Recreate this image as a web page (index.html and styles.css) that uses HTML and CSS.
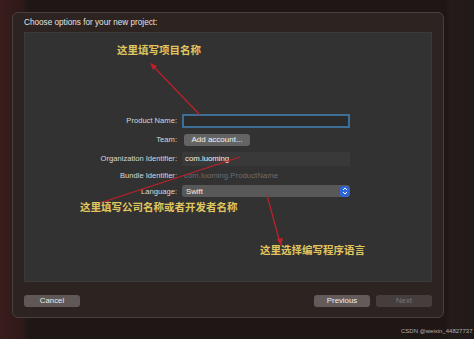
FILE: index.html
```html
<!DOCTYPE html>
<html>
<head>
<meta charset="utf-8">
<link rel="stylesheet" href="styles.css">
</head>
<body>
<div class="screen">
  <div class="dialog">
    <div class="title">Choose options for your new project:</div>
    <div class="panel">
      <div class="form">
        <div class="label">Product Name:</div>
        <div class="ctl"><div class="input focus"></div></div>
        <div class="label">Team:</div>
        <div class="ctl"><div class="btn-add">Add account...</div></div>
        <div class="label">Organization Identifier:</div>
        <div class="ctl"><div class="input filled">com.luoming</div></div>
        <div class="label">Bundle Identifier:</div>
        <div class="ctl"><div class="bundle">com.luoming.ProductName</div></div>
        <div class="label">Language:</div>
        <div class="ctl">
          <div class="popup"><span>Swift</span>
            <span class="stepper"><svg width="6" height="8" viewBox="0 0 6 8"><path d="M1 3 L3 1 L5 3 M1 5 L3 7 L5 5" fill="none" stroke="#fff" stroke-width="1"/></svg></span>
          </div>
        </div>
      </div>
    </div>
    <div class="footer">
      <div class="btn btn-cancel">Cancel</div>
      <div class="spacer"></div>
      <div class="btn btn-prev">Previous</div>
      <div class="btn btn-next">Next</div>
    </div>
  </div>

  <svg class="arrows" width="474" height="339" viewBox="0 0 474 339">
    <g stroke="#c0202a" stroke-width="1.2" fill="none">
      <line x1="200" y1="115" x2="152" y2="65"/>
      <line x1="240" y1="157" x2="100" y2="203"/>
      <line x1="267" y1="195" x2="280" y2="243"/>
    </g>
    <g fill="#c0202a">
      <polygon points="150,63 157,66 153,70"/>
      <polygon points="281,246 277,239 283,238"/>
    </g>
  </svg>

  <div class="note note1">这里填写项目名称</div>
  <div class="note note2">这里填写公司名称或者开发者名称</div>
  <div class="note note3">这里选择编写程序语言</div>
  <div class="watermark">CSDN @weixin_44827737</div>
</div>
</body>
</html>
```

FILE: styles.css
```css
* { box-sizing: border-box; }
html, body {
  margin: 0;
  padding: 0;
}
body {
  width: 474px;
  height: 339px;
  overflow: hidden;
  font-family: "Liberation Sans", Arial, sans-serif;
}
.screen {
  position: relative;
  width: 474px;
  height: 339px;
  background:
    linear-gradient(to right, #3a1c1c 0px, #2e1a19 22px, #1e1715 28px, #1e1715 446px, #241c1a 450px, #211918 474px);
  padding: 12px 0 0 12px;
}
.dialog {
  width: 432px;
  height: 306px;
  background: #2d2320;
  border: 1px solid #4a3f3c;
  border-radius: 6px;
  padding: 0 11px;
  display: flex;
  flex-direction: column;
}
.title {
  height: 19px;
  line-height: 19px;
  font-size: 8.2px;
  color: #e6e2e0;
}
.panel {
  height: 250px;
  background: #323232;
  border: 1px solid #3b3939;
}
.form {
  margin-top: 78px;
  display: grid;
  grid-template-columns: 152px 168px;
  column-gap: 5px;
  grid-template-rows: 19px 19px 19px 14px 18px;
  align-items: center;
}
.label {
  text-align: right;
  font-size: 7.6px;
  color: #d9d9d9;
}
.ctl {
  display: flex;
  align-items: center;
}
.input {
  width: 168px;
  height: 14px;
  background: #393939;
  font-size: 7.8px;
  color: #f0f0f0;
  padding-left: 3px;
  line-height: 14px;
}
.input.focus {
  background: #2b2b2b;
  border: 2px solid #3d6e96;
}
.btn-add {
  margin-left: 2px;
  width: 66px;
  height: 12px;
  line-height: 12px;
  background: #646464;
  border-radius: 3px;
  text-align: center;
  font-size: 8px;
  color: #f2f2f2;
}
.bundle {
  font-size: 7.8px;
  color: #6d6d6d;
  padding-left: 2px;
}
.popup {
  width: 168px;
  height: 12px;
  background: #585858;
  border-radius: 3px;
  display: flex;
  align-items: center;
  justify-content: space-between;
  padding-left: 4px;
  font-size: 7.8px;
  color: #f0f0f0;
}
.stepper {
  width: 9px;
  height: 11px;
  border-radius: 3px;
  background: #2f67d8;
  display: flex;
  align-items: center;
  justify-content: center;
  margin-right: 1px;
}
.stepper svg { display: block; }
.footer {
  margin-top: 13px;
  height: 12px;
  display: flex;
  gap: 6px;
}
.spacer { flex: 1; }
.btn {
  width: 56px;
  height: 12px;
  line-height: 12px;
  border-radius: 3px;
  text-align: center;
  font-size: 7.8px;
}
.btn-cancel {
  background: #5f5856;
  color: #eeeaea;
}
.btn-prev {
  background: #625b59;
  color: #f2eeee;
}
.btn-next {
  background: #463e3c;
  color: #7c7371;
}
.arrows {
  position: absolute;
  left: 0;
  top: 0;
  pointer-events: none;
}
.note {
  position: absolute;
  font-family: "Noto Sans CJK SC", sans-serif;
  font-weight: bold;
  font-size: 10.5px;
  line-height: 12px;
  color: #e0c65e;
  white-space: nowrap;
}
.note1 { left: 117px; top: 44px; }
.note2 { left: 80px; top: 201px; }
.note3 { left: 260px; top: 244px; }
.watermark {
  position: absolute;
  left: 401px;
  top: 328px;
  font-size: 6px;
  color: #b5b0ae;
  white-space: nowrap;
}
```
